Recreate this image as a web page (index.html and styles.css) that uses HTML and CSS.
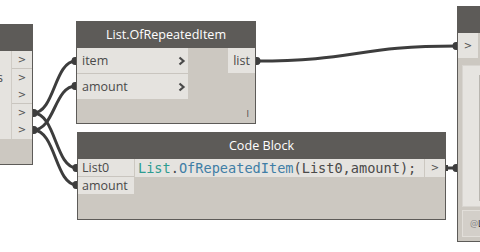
FILE: index.html
```html
<!DOCTYPE html>
<html>
<head>
<meta charset="utf-8">
<link rel="stylesheet" href="styles.css">
</head>
<body>
<div class="canvas">
  <svg class="wires" width="480" height="252" viewBox="0 0 480 252">
    <g fill="none" stroke="#3d3d3d" stroke-width="3" stroke-linecap="round">
      <path d="M33,113 C55,113 54,61 76,61"/>
      <path d="M33,113 C56,113 55,168 77,168"/>
      <path d="M33,130 C55,130 54,86 76,86"/>
      <path d="M33,130 C56,130 55,185 77,185"/>
      <path d="M256,61 C356,61 357,46 457,46"/>
      <path d="M445,168 L457,168"/>
    </g>
    <g fill="#3d3d3d">
      <path d="M33,109 L34,109 A3.5,4 0 0 1 34,117 L33,117 Z"/>
      <path d="M33,126 L34,126 A3.5,4 0 0 1 34,134 L33,134 Z"/>
      <path d="M77,57 L75,57 A3.5,4 0 0 0 75,65 L77,65 Z"/>
      <path d="M77,82 L75,82 A3.5,4 0 0 0 75,90 L77,90 Z"/>
      <path d="M78,164 L76,164 A3.5,4 0 0 0 76,172 L78,172 Z"/>
      <path d="M78,181 L76,181 A3.5,4 0 0 0 76,189 L78,189 Z"/>
      <path d="M255,57 L257,57 A3.5,4 0 0 1 257,65 L255,65 Z"/>
      <path d="M445,165 L448,165 L448,171 L445,171 Z"/>
      <path d="M458,42 L456,42 A3.5,4 0 0 0 456,50 L458,50 Z"/>
      <path d="M458,164 L456,164 A3.5,4 0 0 0 456,172 L458,172 Z"/>
    </g>
  </svg>

  <div class="node n-left">
    <div class="header"></div>
    <div class="left-body">
      <div class="left-labels">
        <div class="lbl-row r1"></div>
        <div class="lbl-row r2"><span>Items</span></div>
      </div>
      <div class="left-ports">
        <div class="lp sep">&gt;</div>
        <div class="lp">&gt;</div>
        <div class="lp sep">&gt;</div>
        <div class="lp">&gt;</div>
        <div class="lp">&gt;</div>
      </div>
    </div>
  </div>

  <div class="node n-repeat">
    <div class="header">List.OfRepeatedItem</div>
    <div class="body">
      <div class="inputs">
        <div class="in-row sep"><span>item</span><svg class="chev" width="8" height="10" viewBox="0 0 8 10"><polyline points="1.5,1.5 5.5,5 1.5,8.5" fill="none" stroke="#4a4a4a" stroke-width="2.2"/></svg></div>
        <div class="in-row"><span>amount</span><svg class="chev" width="8" height="10" viewBox="0 0 8 10"><polyline points="1.5,1.5 5.5,5 1.5,8.5" fill="none" stroke="#4a4a4a" stroke-width="2.2"/></svg></div>
      </div>
      <div class="outputs">
        <div class="out-row">list</div>
      </div>
    </div>
    <div class="lacing">I</div>
  </div>

  <div class="node n-code">
    <div class="header">Code Block</div>
    <div class="body">
      <div class="c-inputs">
        <div class="c-in sep">List0</div>
        <div class="c-in">amount</div>
      </div>
      <div class="c-code">
        <div class="code-line"><span class="k-cls">List</span>.<span class="k-fn">OfRepeatedItem</span>(List0,amount);</div>
      </div>
      <div class="c-out">&gt;</div>
    </div>
  </div>

  <div class="node n-right">
    <div class="header"></div>
    <div class="r-port">&gt;</div>
    <div class="r-panel"><div class="r-track"></div></div>
    <div class="r-foot"><span class="at">@</span>L2</div>
  </div>
</div>
</body>
</html>
```
FILE: styles.css
```css
html, body {
  margin: 0;
  padding: 0;
  background: #ffffff;
}
.canvas {
  position: relative;
  width: 480px;
  height: 252px;
  overflow: hidden;
  background: #ffffff;
  font-family: "Open Sans", "Noto Sans", sans-serif;
  color: #4a4a4a;
}
.wires {
  position: absolute;
  left: 0;
  top: 0;
}
.node {
  position: absolute;
  box-sizing: border-box;
  border: 1px solid #5d5b58;
  background: #ccc8c1;
  display: flex;
  flex-direction: column;
}
.header {
  height: 26px;
  flex: none;
  background: #5d5b58;
  color: #ffffff;
  font-size: 12.6px;
  line-height: 26px;
  text-align: center;
}
.sep {
  border-bottom: 1px solid #c9c5bf;
}

/* left partial node */
.n-left {
  left: -120px;
  top: 24px;
  width: 153px;
  height: 141px;
}
.left-body {
  display: flex;
  height: 88px;
  background: #e5e3df;
}
.left-labels {
  flex: 1;
  display: flex;
  flex-direction: column;
}
.lbl-row.r1 { height: 18px; }
.lbl-row.r2 {
  height: 17px;
  text-align: right;
  padding-right: 8px;
  font-size: 12.5px;
  line-height: 17px;
}
.left-ports {
  width: 20px;
  border-left: 1px solid #cfcbc5;
  display: flex;
  flex-direction: column;
}
.lp {
  box-sizing: border-box;
  height: 17.6px;
  font-family: "DejaVu Sans", sans-serif;
  font-size: 10px;
  line-height: 17px;
  text-align: center;
  color: #555;
}

/* List.OfRepeatedItem */
.n-repeat {
  left: 76px;
  top: 21px;
  width: 180px;
  height: 103px;
}
.n-repeat .body {
  display: flex;
  justify-content: space-between;
  align-items: flex-start;
}
.inputs {
  width: 111px;
  background: #e5e3df;
}
.in-row {
  height: 25px;
  display: flex;
  align-items: center;
  justify-content: space-between;
  padding: 0 2px 0 5px;
  font-size: 12.5px;
}
.outputs {
  width: 27px;
}
.out-row {
  height: 25px;
  background: #e5e3df;
  font-size: 12.5px;
  line-height: 25px;
  text-align: center;
}
.lacing {
  margin-top: auto;
  align-self: flex-end;
  font-size: 9px;
  line-height: 10px;
  padding: 0 6px 4px 0;
  color: #444;
}

/* Code Block */
.n-code {
  left: 77px;
  top: 132px;
  width: 369px;
  height: 88px;
}
.n-code .body {
  display: flex;
  align-items: flex-start;
}
.c-inputs {
  width: 56px;
  background: #e5e3df;
}
.c-in {
  height: 17px;
  line-height: 17px;
  font-size: 12.5px;
  padding-left: 4px;
}
.c-code {
  flex: 1;
  margin-left: 1px;
  height: 18px;
  background: #e5e3df;
}
.code-line {
  font-family: "DejaVu Sans Mono", monospace;
  font-size: 13.6px;
  line-height: 18px;
  padding-left: 3px;
  color: #4a4a4a;
  white-space: pre;
}
.k-cls { color: #2e9c91; }
.k-fn { color: #3f7ea6; }
.c-out {
  width: 20px;
  height: 18px;
  margin-left: 1px;
  background: #e5e3df;
  font-family: "DejaVu Sans", sans-serif;
  font-size: 10px;
  line-height: 18px;
  text-align: center;
  color: #555;
}

/* right partial node */
.n-right {
  left: 457px;
  top: 6px;
  width: 120px;
  height: 236px;
}
.r-port {
  width: 20px;
  height: 25px;
  background: #e5e3df;
  font-family: "DejaVu Sans", sans-serif;
  font-size: 10px;
  line-height: 25px;
  text-align: center;
  color: #555;
}
.r-panel {
  margin: 7px 0 0 4px;
  height: 142px;
  box-sizing: border-box;
  border: 1px solid #d8d5d0;
  background: #e6e4e0;
  padding: 9px 0 0 16px;
}
.r-track {
  height: 126px;
  border-left: 1px solid #b9b6b0;
}
.r-foot {
  margin: 3px 0 0 4px;
  height: 27px;
  box-sizing: border-box;
  border: 1px solid #e2dfda;
  background: #d3cfc9;
  font-size: 9px;
  line-height: 25px;
  padding-left: 7px;
  color: #222;
}
.at { color: #888; }
```
